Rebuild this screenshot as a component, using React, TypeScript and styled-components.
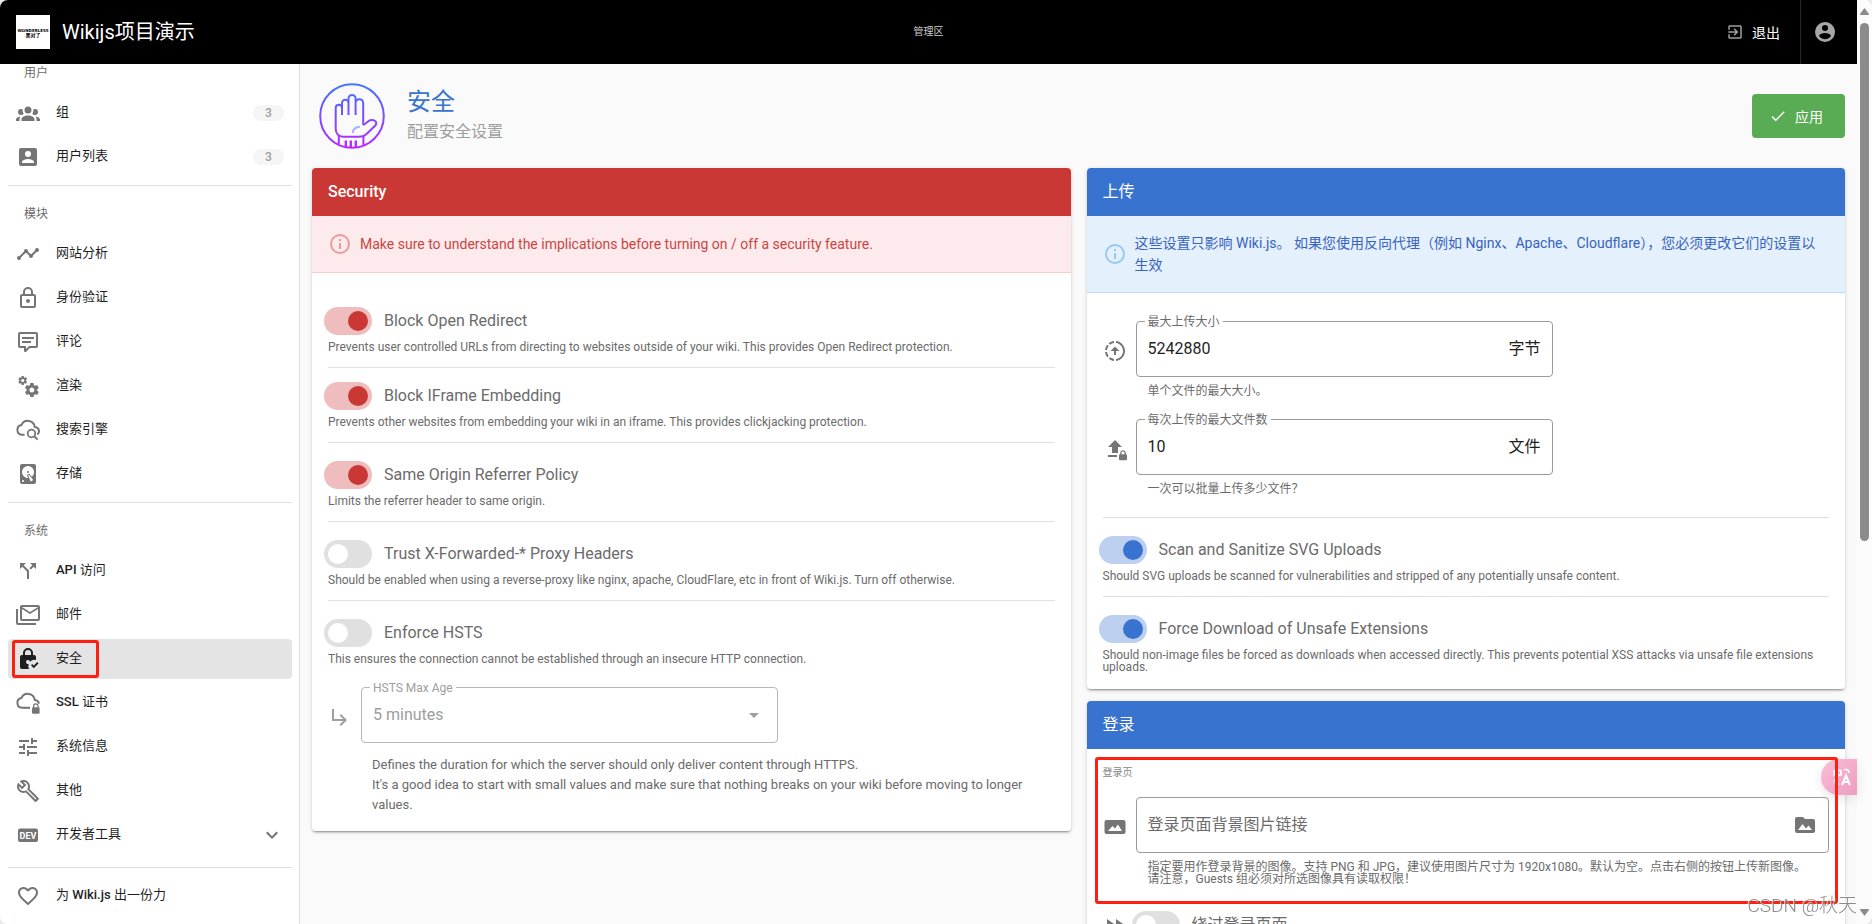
import React, { useState } from 'react';
import styled, { createGlobalStyle, css } from 'styled-components';

const palette = {
  blue: '#3973d0',
  blueTrack: '#bdd0f0',
  red: '#c93834',
  redTrack: '#efbdbe',
  green: '#59ac53',
  text: '#1f1f1f',
  muted: '#6b6b6b',
  faint: '#9e9e9e',
  line: '#e0e0e0',
  mark: '#fd2010',
};

const GlobalStyle = createGlobalStyle`
  *, *::before, *::after { box-sizing: border-box; }
  html, body { margin: 0; background: #e9ecee; }
  body, button, input, select {
    font-family: Roboto, "Noto Sans CJK SC", sans-serif;
  }
`;

/* ---------- icons ---------- */

const paths = {
  group:
    'M12,5.5A3.5,3.5 0 0,1 15.5,9A3.5,3.5 0 0,1 12,12.5A3.5,3.5 0 0,1 8.5,9A3.5,3.5 0 0,1 12,5.5M5,8C5.56,8 6.08,8.15 6.53,8.42C6.38,9.85 6.8,11.27 7.66,12.38C7.16,13.34 6.16,14 5,14A3,3 0 0,1 2,11A3,3 0 0,1 5,8M19,8A3,3 0 0,1 22,11A3,3 0 0,1 19,14C17.84,14 16.84,13.34 16.34,12.38C17.2,11.27 17.62,9.85 17.47,8.42C17.92,8.15 18.44,8 19,8M5.5,18.25C5.5,16.18 8.41,14.5 12,14.5C15.59,14.5 18.5,16.18 18.5,18.25V20H5.5V18.25M0,20V18.5C0,17.11 1.89,15.94 4.45,15.6C3.86,16.28 3.5,17.22 3.5,18.25V20H0M24,20H20.5V18.25C20.5,17.22 20.14,16.28 19.55,15.6C22.11,15.94 24,17.11 24,18.5V20Z',
  accountBox:
    'M6,17C6,15 10,13.9 12,13.9C14,13.9 18,15 18,17V18H6M15,9A3,3 0 0,1 12,12A3,3 0 0,1 9,9A3,3 0 0,1 12,6A3,3 0 0,1 15,9M3,5V19A2,2 0 0,0 5,21H19A2,2 0 0,0 21,19V5A2,2 0 0,0 19,3H5C3.89,3 3,3.9 3,5Z',
  timeline:
    'M3,14L3.5,14.07L8.07,9.5C7.89,8.85 8.06,8.11 8.59,7.59C9.37,6.8 10.63,6.8 11.41,7.59C11.94,8.11 12.11,8.85 11.93,9.5L14.5,12.07L15,12C15.18,12 15.35,12 15.5,12.07L19.07,8.5C19,8.35 19,8.18 19,8A2,2 0 0,1 21,6A2,2 0 0,1 23,8A2,2 0 0,1 21,10C20.82,10 20.65,10 20.5,9.93L16.93,13.5C17,13.65 17,13.82 17,14A2,2 0 0,1 15,16A2,2 0 0,1 13,14L13.07,13.5L10.5,10.93C10.18,11 9.82,11 9.5,10.93L4.93,15.5L5,16A2,2 0 0,1 3,18A2,2 0 0,1 1,16A2,2 0 0,1 3,14Z',
  lock:
    'M12,17C10.89,17 10,16.1 10,15C10,13.89 10.89,13 12,13A2,2 0 0,1 14,15A2,2 0 0,1 12,17M18,20V10H6V20H18M18,8A2,2 0 0,1 20,10V20A2,2 0 0,1 18,22H6C4.89,22 4,21.1 4,20V10C4,8.89 4.89,8 6,8H7V6A5,5 0 0,1 12,1A5,5 0 0,1 17,6V8H18M12,3A3,3 0 0,0 9,6V8H15V6A3,3 0 0,0 12,3Z',
  comment:
    'M9,22A1,1 0 0,1 8,21V18H4A2,2 0 0,1 2,16V4C2,2.89 2.9,2 4,2H20A2,2 0 0,1 22,4V16A2,2 0 0,1 20,18H13.9L10.2,21.71C10,21.9 9.75,22 9.5,22H9M10,16V19.08L13.08,16H20V4H4V16H10M6,7H18V9H6V7M6,11H15V13H6V11Z',
  cogs:
    'M15.9,18.45C17.25,18.45 18.35,17.35 18.35,16C18.35,14.65 17.25,13.55 15.9,13.55C14.54,13.55 13.45,14.65 13.45,16C13.45,17.35 14.54,18.45 15.9,18.45M21.1,16.68L22.58,17.84C22.71,17.95 22.75,18.13 22.66,18.29L21.26,20.71C21.17,20.86 21,20.92 20.83,20.86L19.09,20.16C18.73,20.44 18.33,20.67 17.91,20.85L17.64,22.7C17.62,22.87 17.47,23 17.3,23H14.5C14.32,23 14.18,22.87 14.15,22.7L13.89,20.85C13.46,20.67 13.07,20.44 12.71,20.16L10.96,20.86C10.81,20.92 10.62,20.86 10.54,20.71L9.14,18.29C9.05,18.13 9.09,17.95 9.22,17.84L10.7,16.68L10.65,16L10.7,15.31L9.22,14.16C9.09,14.05 9.05,13.86 9.14,13.71L10.54,11.29C10.62,11.13 10.81,11.07 10.96,11.13L12.71,11.84C13.07,11.56 13.46,11.32 13.89,11.15L14.15,9.29C14.18,9.13 14.32,9 14.5,9H17.3C17.47,9 17.62,9.13 17.64,9.29L17.91,11.15C18.33,11.32 18.73,11.56 19.09,11.84L20.83,11.13C21,11.07 21.17,11.13 21.26,11.29L22.66,13.71C22.75,13.86 22.71,14.05 22.58,14.16L21.1,15.31L21.15,16L21.1,16.68M6.69,8.07C7.56,8.07 8.26,7.37 8.26,6.5C8.26,5.63 7.56,4.92 6.69,4.92A1.58,1.58 0 0,0 5.11,6.5C5.11,7.37 5.82,8.07 6.69,8.07M10.03,6.94L11,7.68C11.07,7.75 11.09,7.87 11.03,7.97L10.13,9.53C10.08,9.63 9.96,9.67 9.86,9.63L8.74,9.18L8,9.62L7.81,10.81C7.79,10.92 7.7,11 7.59,11H5.79C5.67,11 5.58,10.92 5.56,10.81L5.4,9.62L4.64,9.18L3.52,9.63C3.41,9.67 3.3,9.63 3.24,9.53L2.34,7.97C2.28,7.87 2.31,7.75 2.39,7.68L3.34,6.94L3.31,6.5L3.34,6.06L2.39,5.32C2.31,5.25 2.28,5.13 2.34,5.03L3.24,3.47C3.3,3.37 3.41,3.33 3.52,3.37L4.63,3.82L5.4,3.38L5.56,2.19C5.58,2.08 5.67,2 5.79,2H7.59C7.7,2 7.79,2.08 7.81,2.19L8,3.38L8.74,3.82L9.86,3.37C9.96,3.33 10.08,3.37 10.13,3.47L11.03,5.03C11.09,5.13 11.07,5.25 11,5.32L10.03,6.06L10.06,6.5L10.03,6.94Z',
  disk:
    'M6,2H18A2,2 0 0,1 20,4V20A2,2 0 0,1 18,22H6A2,2 0 0,1 4,20V4A2,2 0 0,1 6,2M12,4A6,6 0 0,0 6,10C6,13.31 8.69,16 12.1,16L11.22,13.77C10.95,13.29 11.11,12.68 11.59,12.4L12.45,11.9C12.93,11.63 13.54,11.79 13.82,12.27L15.74,14.69C17.12,13.59 18,11.9 18,10A6,6 0 0,0 12,4M12,9A1,1 0 0,1 13,10A1,1 0 0,1 12,11A1,1 0 0,1 11,10A1,1 0 0,1 12,9M7,18A1,1 0 0,0 6,19A1,1 0 0,0 7,20A1,1 0 0,0 8,19A1,1 0 0,0 7,18M12.09,13.27L14.58,19.58L17.17,18.08L12.95,12.77L12.09,13.27Z',
  split:
    'M14,4L16.29,6.29L13.41,9.17L14.83,10.59L17.71,7.71L20,10V4M10,4H4V10L6.29,7.71L11,12.41V20H13V11.59L7.71,6.29',
  mail:
    'M22,2H6C4.9,2 4,2.9 4,4V16A2,2 0 0,0 6,18H22A2,2 0 0,0 24,16V4A2,2 0 0,0 22,2M22,16H6V6L14,11L22,6V16M22,4L14,9L6,4M2,6H0V20A2,2 0 0,0 2,22H20V20H2V6Z',
  lockCheck:
    'M18,8H17V6A5,5 0 0,0 7,6V8H6A2,2 0 0,0 4,10V20A2,2 0 0,0 6,22H13.1A6.2,6.2 0 0,1 12.7,16.9A2,2 0 1,1 14,14.8A6.2,6.2 0 0,1 20,13.1V10A2,2 0 0,0 18,8M9,6A3,3 0 0,1 15,6V8H9V6M17.75,21.2L15,18.2L16.16,17L17.75,18.6L21.34,15L22.5,16.4L17.75,21.2Z',
  tune:
    'M3,17V19H9V17H3M3,5V7H13V5H3M13,21V19H21V17H13V15H11V21H13M7,9V11H3V13H7V15H9V9H7M21,13V11H11V13H21M15,9H17V7H21V5H17V3H15V9Z',
  wrench:
    'M22.61,19L13.53,9.91C14.46,7.57 14,4.81 12.09,2.91C9.79,0.61 6.21,0.4 3.66,2.26L7.5,6.11L6.08,7.52L2.25,3.69C0.39,6.23 0.6,9.82 2.9,12.11C4.76,13.97 7.47,14.46 9.79,13.59L18.9,22.7C19.29,23.09 19.92,23.09 20.31,22.7L22.61,20.4C23,20 23,19.39 22.61,19M19.61,20.59L10.15,11.13C9.54,11.58 8.86,11.85 8.15,11.95C6.79,12.15 5.36,11.74 4.32,10.7C3.37,9.76 2.93,8.5 3,7.26L6.09,10.35L10.33,6.11L7.24,3C8.48,2.95 9.73,3.39 10.68,4.33C11.76,5.41 12.17,6.9 11.92,8.29C11.8,9 11.5,9.66 11.04,10.25L20.5,19.7L19.61,20.59Z',
  heart:
    'M12.1,18.55L12,18.65L11.89,18.55C7.14,14.24 4,11.39 4,8.5C4,6.5 5.5,5 7.5,5C9.04,5 10.54,6 11.07,7.36H12.93C13.46,6 14.96,5 16.5,5C18.5,5 20,6.5 20,8.5C20,11.39 16.86,14.24 12.1,18.55M16.5,3C14.76,3 13.09,3.81 12,5.08C10.91,3.81 9.24,3 7.5,3C4.42,3 2,5.41 2,8.5C2,12.27 5.4,15.36 10.55,20.03L12,21.35L13.45,20.03C18.6,15.36 22,12.27 22,8.5C22,5.41 19.58,3 16.5,3Z',
  chevronDown: 'M7.41,8.58L12,13.17L16.59,8.58L18,10L12,16L6,10L7.41,8.58Z',
  exit:
    'M19,3H5C3.89,3 3,3.89 3,5V9H5V5H19V19H5V15H3V19A2,2 0 0,0 5,21H19A2,2 0 0,0 21,19V5C21,3.89 20.1,3 19,3M10.08,15.58L11.5,17L16.5,12L11.5,7L10.08,8.41L12.67,11H3V13H12.67L10.08,15.58Z',
  account:
    'M12,19.2C9.5,19.2 7.29,17.92 6,16C6.03,14 10,12.9 12,12.9C14,12.9 17.97,14 18,16C16.71,17.92 14.5,19.2 12,19.2M12,5A3,3 0 0,1 15,8A3,3 0 0,1 12,11A3,3 0 0,1 9,8A3,3 0 0,1 12,5M12,2A10,10 0 0,0 2,12A10,10 0 0,0 12,22A10,10 0 0,0 22,12C22,6.47 17.5,2 12,2Z',
  check: 'M21,7L9,19L3.5,13.5L4.91,12.09L9,16.17L19.59,5.59L21,7Z',
  info:
    'M11,9H13V7H11M12,20C7.59,20 4,16.41 4,12C4,7.59 7.59,4 12,4C16.41,4 20,7.59 20,12C20,16.41 16.41,20 12,20M12,2A10,10 0 0,0 2,12A10,10 0 0,0 12,22A10,10 0 0,0 22,12A10,10 0 0,0 12,2M11,17H13V11H11V17Z',
  subArrow: 'M19,15L13,21L11.58,19.58L15.17,16H4V4H6V14H15.17L11.58,10.42L13,9L19,15Z',
  menuDown: 'M7,10L12,15L17,10H7Z',
  progressUpload:
    'M13,2.03V4.05C17.39,4.59 20.5,8.58 19.96,12.97C19.5,16.61 16.64,19.5 13,19.93V21.93C18.5,21.38 22.5,16.5 21.95,11C21.5,6.25 17.73,2.5 13,2.03M11,2.06C9.05,2.25 7.19,3 5.67,4.26L7.1,5.74C8.22,4.84 9.57,4.26 11,4.06V2.06M4.26,5.67C3,7.19 2.25,9.04 2.05,11H4.05C4.24,9.58 4.8,8.23 5.69,7.1L4.26,5.67M2.06,13C2.26,14.96 3.03,16.81 4.27,18.33L5.69,16.9C4.81,15.77 4.24,14.42 4.06,13H2.06M7.1,18.37L5.67,19.74C7.18,21 9.04,21.79 11,22V20C9.58,19.82 8.23,19.25 7.1,18.37M12,7.5L7.5,12H11V16H13V12H16.5L12,7.5Z',
  uploadLock:
    'M5,10L12,3L19,10H15V16H9V10H5M5,18H14V20H5V18M22.8,17.3V15.8C22.8,14.4 21.4,13.3 20,13.3C18.6,13.3 17.2,14.4 17.2,15.8V17.3C16.6,17.3 16,17.9 16,18.5V22C16,22.7 16.6,23.3 17.2,23.3H22.7C23.4,23.3 24,22.7 24,22.1V18.6C24,17.9 23.4,17.3 22.8,17.3M21.5,17.3H18.5V15.8C18.5,15 19.2,14.5 20,14.5C20.8,14.5 21.5,15 21.5,15.8V17.3Z',
  image:
    'M3.5,5H20.5A2,2 0 0,1 22.5,7V17A2,2 0 0,1 20.5,19H3.5A2,2 0 0,1 1.5,17V7A2,2 0 0,1 3.5,5M5,16H19L15,9.5L12,13.5L9.5,11L5,16Z',
  folderImage:
    'M5,17L9.5,11L13,15.5L15.5,12.5L19,17M20,6H12L10,4H4A2,2 0 0,0 2,6V18A2,2 0 0,0 4,20H20A2,2 0 0,0 22,18V8A2,2 0 0,0 20,6Z',
  fastForward: 'M13,6V18L21.5,12M4,18L12.5,12L4,6V18Z',
};

type IconName = keyof typeof paths | 'cloudSearch' | 'cloudLock' | 'dev';

const IconSvg = styled.svg<{ $size: number }>`
  display: block;
  flex: none;
  width: ${(p) => p.$size}px;
  height: ${(p) => p.$size}px;
  fill: currentColor;
`;

const cloudOutline =
  'M8.5,16.8H6A4.9,4.9 0 0 1 5.4,7.1A7,7 0 0 1 18.8,9A4.6,4.6 0 0 1 23,12.6';

function Icon({ name, size = 24 }: { name: IconName; size?: number }) {
  return (
    <IconSvg $size={size} viewBox="0 0 24 24" aria-hidden="true">
      {name === 'cloudSearch' && (
        <>
          <path d={cloudOutline} fill="none" stroke="currentColor" strokeWidth="2" />
          <circle cx="15.5" cy="15.5" r="3.8" fill="none" stroke="currentColor" strokeWidth="1.8" />
          <path d="M18.2,18.2L21.6,21.6" stroke="currentColor" strokeWidth="2" />
          <path d="M22.9,12C23.3,13.8 22.6,15.4 21.4,16.4" fill="none" stroke="currentColor" strokeWidth="2" />
        </>
      )}
      {name === 'cloudLock' && (
        <>
          <path d={cloudOutline} fill="none" stroke="currentColor" strokeWidth="2" />
          <path d="M8,16.8H14" stroke="currentColor" strokeWidth="2" />
          <rect x="16" y="16.3" width="7.6" height="6.4" rx="1.2" />
          <path d="M17.6,17V15A2.2,2.2 0 0 1 22,15V17" fill="none" stroke="currentColor" strokeWidth="1.2" />
        </>
      )}
      {name === 'dev' && (
        <>
          <rect x="2" y="5.5" width="20" height="13.5" rx="2" />
          <text x="12" y="15.5" textAnchor="middle" fontSize="9" fontWeight="700" fill="#fff" fontFamily="Roboto">
            DEV
          </text>
        </>
      )}
      {name in paths && <path fillRule="evenodd" d={paths[name as keyof typeof paths]} />}
    </IconSvg>
  );
}

function HandArt() {
  return (
    <HandSvg viewBox="0 0 66 66" aria-hidden="true">
      <defs>
        <linearGradient id="hand" gradientUnits="userSpaceOnUse" x1="33" y1="0" x2="33" y2="66">
          <stop offset="0" stopColor="#4177ff" />
          <stop offset="0.5" stopColor="#7b4dff" />
          <stop offset="1" stopColor="#bd29f7" />
        </linearGradient>
        <linearGradient id="crease" gradientUnits="userSpaceOnUse" x1="41" y1="43" x2="33" y2="50">
          <stop offset="0" stopColor="#8fc4ff" />
          <stop offset="1" stopColor="#b9a3ff" />
        </linearGradient>
      </defs>
      <g fill="none" stroke="url(#hand)" strokeWidth="2">
        <circle cx="33" cy="33" r="31.8" />
        <path d="M16.7,46V24.5A3.2,3.2 0 0 1 23,24.5V32V20A3.2,3.2 0 0 1 29.5,20V32V15.5A3.5,3.5 0 0 1 36.6,15.5V32V20A3.8,3.8 0 0 1 44.2,20V42" />
        <path d="M44.2,42C47,41 49,38 51,37.3C56,35.7 58.5,39.5 56.5,42.3L47,51.5C45,53.4 43,53.8 40,53.8H24C19.5,53.8 16.7,50 16.7,46" />
        <path d="M19.8,52V62M44.4,53V62" />
        <path d="M26.8,57.5V64M31.8,57.5V65M36.8,57.5V64" strokeWidth="2.4" />
      </g>
      <path d="M33.8,50C34,46 37,44 41,43.8" fill="none" stroke="url(#crease)" strokeWidth="2" />
    </HandSvg>
  );
}

const HandSvg = styled.svg`
  display: block;
  flex: none;
  width: 66px;
  height: 66px;
  margin: 7px;
`;

/* ---------- window frame ---------- */

const Window = styled.div`
  display: flex;
  height: 100vh;
  overflow: hidden;
  border-radius: 8px;
  background: #fcfcfc;
`;

const Page = styled.div`
  display: flex;
  flex: 1;
  flex-direction: column;
  min-width: 0;
`;

const Columns = styled.div`
  display: flex;
  flex: 1;
  min-height: 0;
`;

const Scrollbar = styled.div`
  display: flex;
  flex: none;
  flex-direction: column;
  align-items: center;
  justify-content: space-between;
  width: 15px;
  padding: 8px 0;
  color: #8b8b8b;
`;

const Thumb = styled.div`
  width: 9px;
  height: 57%;
  margin: 8px 0 auto;
  border-radius: 5px;
  background: #8b8b8b;
`;

const ScrollArrow = styled.svg`
  display: block;
  width: 9px;
  height: 7px;
  fill: currentColor;
`;

/* ---------- top bar ---------- */

const TopBar = styled.header`
  display: grid;
  flex: none;
  grid-template-columns: 1fr auto 1fr;
  align-items: center;
  height: 64px;
  background: #000;
  color: #fff;
`;

const Brand = styled.div`
  display: flex;
  align-items: center;
  gap: 12px;
  padding-left: 16px;
  font-size: 20px;
  line-height: 32px;
`;

const Logo = styled.svg`
  display: block;
  width: 34px;
  height: 34px;
`;

const Area = styled.div`
  font-size: 10px;
  line-height: 16px;
  color: #d0d0d0;
`;

const TopActions = styled.div`
  display: flex;
  align-items: center;
  justify-content: flex-end;
  height: 64px;
`;

const ExitButton = styled.button`
  display: flex;
  align-items: center;
  gap: 8px;
  height: 36px;
  padding: 0 20px;
  border: 0;
  background: none;
  color: #fff;
  font-size: 14px;

  svg {
    color: #9e9e9e;
  }
`;

const AccountButton = styled.button`
  display: flex;
  align-items: center;
  height: 64px;
  padding: 0 20px 0 12px;
  border: 0;
  border-left: 1px solid #262626;
  background: none;
  color: #a6a6a6;
`;

/* ---------- side navigation ---------- */

const Sidebar = styled.nav`
  flex: none;
  width: 300px;
  overflow: hidden;
  border-right: 1px solid ${palette.line};
  background: #fff;
`;

const NavScroll = styled.div`
  margin-top: -11px;
  padding: 0 7px 0 8px;
`;

const NavSection = styled.section`
  &:not(:first-child) {
    margin-top: 8px;
    padding-top: 8px;
    border-top: 1px solid ${palette.line};
  }

  &:last-child {
    margin-top: 12px;
  }
`;

const NavHeading = styled.h2`
  margin: 0;
  padding: 0 16px;
  color: ${palette.muted};
  font-size: 12px;
  font-weight: 400;
  line-height: 40px;
`;

const NavList = styled.ul`
  display: flex;
  flex-direction: column;
  gap: 4px;
  margin: 0;
  padding: 0;
  list-style: none;
`;

const NavItem = styled.li`
  position: relative;
`;

const NavLink = styled.a<{ $active?: boolean }>`
  display: flex;
  align-items: center;
  gap: 16px;
  height: 40px;
  padding: 0 8px;
  border-radius: 4px;
  color: ${palette.text};
  font-size: 13px;
  line-height: 16px;
  text-decoration: none;
  background: ${(p) => (p.$active ? '#e4e4e4' : 'transparent')};

  svg {
    color: ${(p) => (p.$active ? palette.text : '#757575')};
  }
`;

const NavText = styled.span`
  flex: 1;
  padding-bottom: 2px;
`;

const Latin = styled.span`
  font-weight: 500;
`;

const Count = styled.span`
  width: 31px;
  border-radius: 8px;
  background: #f5f5f5;
  color: ${palette.faint};
  font-size: 12px;
  font-weight: 500;
  line-height: 16px;
  text-align: center;
`;

const ItemMark = styled.div`
  position: absolute;
  inset: 1px auto 1px 4px;
  width: 87px;
  border: 3px solid ${palette.mark};
  border-radius: 3px;
  pointer-events: none;
`;

/* ---------- main content ---------- */

const Main = styled.main`
  flex: 1;
  min-width: 0;
  overflow: hidden;
  padding: 0 12px;
  background: #fafafa;
`;

const PageHead = styled.div`
  display: flex;
  align-items: center;
  height: 104px;
`;

const HeadText = styled.div`
  flex: 1;
  margin: 0 0 2px 15px;
`;

const Title = styled.h1`
  margin: 0 0 2px;
  color: ${palette.blue};
  font-size: 24px;
  font-weight: 400;
  line-height: 32px;
`;

const Subtitle = styled.p`
  margin: 0;
  color: ${palette.faint};
  font-size: 16px;
  line-height: 24px;
`;

const ApplyButton = styled.button`
  display: flex;
  align-items: center;
  gap: 8px;
  height: 44px;
  padding: 0 22px 0 17px;
  border: 0;
  border-radius: 4px;
  background: ${palette.green};
  color: #fff;
  font-size: 14px;
`;

const CardGrid = styled.div`
  display: grid;
  grid-template-columns: 1fr 1fr;
  gap: 16px;
  align-items: start;
`;

const CardStack = styled.div`
  display: flex;
  flex-direction: column;
  gap: 12px;
`;

type Tone = 'red' | 'blue';

const Card = styled.section`
  overflow: hidden;
  border-radius: 4px;
  background: #fff;
  box-shadow:
    0 3px 1px -2px rgba(0, 0, 0, 0.2),
    0 2px 2px 0 rgba(0, 0, 0, 0.14),
    0 1px 5px 0 rgba(0, 0, 0, 0.12);
`;

const CardTitle = styled.h2<{ $tone: Tone }>`
  margin: 0;
  padding: 0 16px;
  background: ${(p) => palette[p.$tone]};
  color: #fff;
  font-size: 16px;
  font-weight: 400;
  line-height: 48px;
`;

const Notice = styled.div<{ $tone: Tone }>`
  display: flex;
  align-items: center;
  gap: 8px;
  padding: 16px;
  border-bottom: 1px solid;
  font-size: 14px;
  line-height: 22px;
  ${(p) =>
    p.$tone === 'red'
      ? css`
          border-color: #fbcbcf;
          background: #fdeaec;
          color: #cb4643;
          svg {
            color: #ea9b9b;
          }
        `
      : css`
          border-color: #badbf9;
          background: #e4f0fc;
          color: #3763be;
          svg {
            color: #95c7f7;
          }
        `}
`;

const CardBody = styled.div`
  padding: 16px;
`;

const Setting = styled.div<{ $tight?: boolean }>`
  padding-top: ${(p) => (p.$tight ? 14 : 18)}px;
`;

const Rule = styled.hr`
  height: 1px;
  margin: 14px 0 0;
  border: 0;
  background: ${palette.line};
`;

const SwitchLabel = styled.label`
  display: flex;
  align-items: center;
  gap: 12px;
  margin-left: -4px;
  color: ${palette.muted};
  font-size: 16px;
  line-height: 28px;
`;

const SwitchInput = styled.input<{ $tone: Tone }>`
  appearance: none;
  flex: none;
  width: 48px;
  height: 28px;
  margin: 0;
  padding: 4px;
  border-radius: 14px;
  background: ${palette.line};

  &::before {
    content: '';
    display: block;
    width: 20px;
    height: 20px;
    border-radius: 10px;
    background: #fff;
  }

  &:checked {
    background: ${(p) => (p.$tone === 'red' ? palette.redTrack : palette.blueTrack)};
  }

  &:checked::before {
    margin-left: 20px;
    background: ${(p) => palette[p.$tone]};
  }
`;

const Hint = styled.p`
  margin: 6px 0 0;
  color: ${palette.muted};
  font-size: 12px;
  line-height: 12px;
`;

function Switch({
  id,
  tone,
  label,
  hint,
  initial = false,
  tight = false,
}: {
  id: string;
  tone: Tone;
  label: string;
  hint: string;
  initial?: boolean;
  tight?: boolean;
}) {
  const [on, setOn] = useState(initial);
  return (
    <Setting $tight={tight}>
      <SwitchLabel htmlFor={id}>
        <SwitchInput id={id} type="checkbox" $tone={tone} checked={on} onChange={() => setOn(!on)} />
        {label}
      </SwitchLabel>
      <Hint>{hint}</Hint>
    </Setting>
  );
}

/* ---------- outlined fields ---------- */

const FieldRow = styled.div<{ $wide?: boolean; $dim?: boolean }>`
  display: flex;
  gap: 9px;
  max-width: ${(p) => (p.$wide ? 'none' : '450px')};
  color: ${(p) => (p.$dim ? palette.faint : '#757575')};

  & > svg {
    margin-top: 18px;
  }
`;

const Box = styled.div<{ $dim?: boolean }>`
  position: relative;
  display: flex;
  flex: 1;
  align-items: center;
  height: 56px;
  min-width: 0;
  padding: 0 11px;
  border: 1px solid ${(p) => (p.$dim ? '#b8b8b8' : '#9b9b9b')};
  border-radius: 4px;
  background: #fff;
`;

const FloatLabel = styled.label<{ $dim?: boolean }>`
  position: absolute;
  top: -6px;
  left: 8px;
  padding: 0 3px;
  background: #fff;
  color: ${(p) => (p.$dim ? palette.faint : palette.muted)};
  font-size: 12px;
  line-height: 12px;
`;

const textControl = css`
  flex: 1;
  width: 100%;
  min-width: 0;
  height: 32px;
  padding: 0 0 2px;
  border: 0;
  outline: 0;
  background: none;
  font-size: 16px;
`;

const TextInput = styled.input`
  ${textControl}
  color: ${palette.text};

  &::placeholder {
    color: ${palette.muted};
    opacity: 1;
  }
`;

const SelectInput = styled.select`
  ${textControl}
  appearance: none;
  color: ${palette.faint};
  opacity: 1;
`;

const Suffix = styled.span`
  color: ${palette.text};
  font-size: 16px;
  line-height: 24px;
`;

const PickButton = styled.button`
  padding: 0;
  border: 0;
  background: none;
  color: #757575;
`;

const FieldHint = styled.p`
  margin: 8px 0 22px;
  padding-left: 45px;
  color: ${palette.muted};
  font-size: 12px;
  line-height: 12px;
`;

const LongHint = styled.p`
  margin: 12px 0 0;
  padding-left: 44px;
  color: ${palette.muted};
  font-size: 13px;
  line-height: 20px;
`;

const FieldGroup = styled.div<{ $gap: number }>`
  padding-top: ${(p) => p.$gap}px;
`;

const Overline = styled.h3`
  margin: 0 0 16px;
  color: #858585;
  font-size: 10px;
  font-weight: 400;
  line-height: 16px;
`;

const Marked = styled.div`
  position: relative;
  display: flow-root;
`;

const AreaMark = styled.div`
  position: absolute;
  z-index: 2;
  inset: -8px -9px 3px -8px;
  border: 3px solid ${palette.mark};
  border-radius: 3px;
  pointer-events: none;
`;

const BypassRow = styled.div`
  display: flex;
  align-items: center;
  gap: 9px;
  padding-top: 4px;
  color: #757575;
`;

/* ---------- floating pieces ---------- */

const TranslateButton = styled.button`
  position: fixed;
  z-index: 1;
  top: 759px;
  right: 15px;
  display: flex;
  align-items: center;
  justify-content: center;
  width: 36px;
  height: 36px;
  padding: 0 0 0 5px;
  border: 0;
  border-radius: 18px 0 0 18px;
  background: linear-gradient(135deg, #f9bed6, #ee9dc0);
  box-shadow: 0 4px 12px rgba(0, 0, 0, 0.1);
`;

const TranslateIcon = styled.svg`
  display: block;
  width: 20px;
  height: 20px;
`;

const Watermark = styled.div`
  position: fixed;
  z-index: 3;
  right: 15px;
  bottom: 4px;
  color: rgba(120, 120, 120, 0.85);
  font-size: 19px;
  font-weight: 300;
  line-height: 28px;
  text-shadow: -1px -1px 0 rgba(255, 255, 255, 0.7);
`;

/* ---------- data ---------- */

type Item = { icon: IconName; text: string; count?: number; active?: boolean; expand?: boolean };

const sections: { heading?: string; items: Item[] }[] = [
  {
    heading: '用户',
    items: [
      { icon: 'group', text: '组', count: 3 },
      { icon: 'accountBox', text: '用户列表', count: 3 },
    ],
  },
  {
    heading: '模块',
    items: [
      { icon: 'timeline', text: '网站分析' },
      { icon: 'lock', text: '身份验证' },
      { icon: 'comment', text: '评论' },
      { icon: 'cogs', text: '渲染' },
      { icon: 'cloudSearch', text: '搜索引擎' },
      { icon: 'disk', text: '存储' },
    ],
  },
  {
    heading: '系统',
    items: [
      { icon: 'split', text: 'API 访问' },
      { icon: 'mail', text: '邮件' },
      { icon: 'lockCheck', text: '安全', active: true },
      { icon: 'cloudLock', text: 'SSL 证书' },
      { icon: 'tune', text: '系统信息' },
      { icon: 'wrench', text: '其他' },
      { icon: 'dev', text: '开发者工具', expand: true },
    ],
  },
  { items: [{ icon: 'heart', text: '为 Wiki.js 出一份力' }] },
];

/* Latin words are set in medium weight next to regular Chinese text. */
function MixedText({ text }: { text: string }) {
  return (
    <>
      {text.split(/([A-Za-z.]+)/).map((part, i) => (i % 2 ? <Latin key={i}>{part}</Latin> : part))}
    </>
  );
}

function Navigation() {
  return (
    <Sidebar>
      <NavScroll>
        {sections.map((section, i) => (
          <NavSection key={i}>
            {section.heading && <NavHeading>{section.heading}</NavHeading>}
            <NavList>
              {section.items.map((item) => (
                <NavItem key={item.text}>
                  <NavLink href="#" $active={item.active}>
                    <Icon name={item.icon} />
                    <NavText>
                      <MixedText text={item.text} />
                    </NavText>
                    {item.count !== undefined && <Count>{item.count}</Count>}
                    {item.expand && <Icon name="chevronDown" />}
                  </NavLink>
                  {item.active && <ItemMark />}
                </NavItem>
              ))}
            </NavList>
          </NavSection>
        ))}
      </NavScroll>
    </Sidebar>
  );
}

function SecurityCard() {
  return (
    <Card>
      <CardTitle $tone="red">
        <MixedText text="Security" />
      </CardTitle>
      <Notice $tone="red">
        <Icon name="info" />
        <span>Make sure to understand the implications before turning on / off a security feature.</span>
      </Notice>
      <CardBody>
        <Switch
          id="redirect"
          tone="red"
          initial
          label="Block Open Redirect"
          hint="Prevents user controlled URLs from directing to websites outside of your wiki. This provides Open Redirect protection."
        />
        <Rule />
        <Switch
          id="iframe"
          tone="red"
          initial
          tight
          label="Block IFrame Embedding"
          hint="Prevents other websites from embedding your wiki in an iframe. This provides clickjacking protection."
        />
        <Rule />
        <Switch
          id="referrer"
          tone="red"
          initial
          label="Same Origin Referrer Policy"
          hint="Limits the referrer header to same origin."
        />
        <Rule />
        <Switch
          id="proxy"
          tone="red"
          label="Trust X-Forwarded-* Proxy Headers"
          hint="Should be enabled when using a reverse-proxy like nginx, apache, CloudFlare, etc in front of Wiki.js. Turn off otherwise."
        />
        <Rule />
        <Switch
          id="hsts"
          tone="red"
          label="Enforce HSTS"
          hint="This ensures the connection cannot be established through an insecure HTTP connection."
        />
        <FieldGroup $gap={22}>
          <FieldRow $dim>
            <Icon name="subArrow" />
            <Box $dim>
              <FloatLabel htmlFor="max-age" $dim>
                HSTS Max Age
              </FloatLabel>
              <SelectInput id="max-age" disabled defaultValue="300">
                <option value="300">5 minutes</option>
              </SelectInput>
              <Icon name="menuDown" />
            </Box>
          </FieldRow>
          <LongHint>
            Defines the duration for which the server should only deliver content through HTTPS.
            <br />
            It's a good idea to start with small values and make sure that nothing breaks on your wiki before moving to
            longer values.
          </LongHint>
        </FieldGroup>
      </CardBody>
    </Card>
  );
}

function UploadCard() {
  return (
    <Card>
      <CardTitle $tone="blue">上传</CardTitle>
      <Notice $tone="blue">
        <Icon name="info" />
        <span>
          这些设置只影响 Wiki.js。 如果您使用反向代理（例如 Nginx、Apache、Cloudflare），您必须更改它们的设置以生效
        </span>
      </Notice>
      <CardBody>
        <FieldGroup $gap={12}>
          <FieldRow>
            <Icon name="progressUpload" />
            <Box>
              <FloatLabel htmlFor="max-size">最大上传大小</FloatLabel>
              <TextInput id="max-size" defaultValue="5242880" />
              <Suffix>字节</Suffix>
            </Box>
          </FieldRow>
          <FieldHint>单个文件的最大大小。</FieldHint>
          <FieldRow>
            <Icon name="uploadLock" />
            <Box>
              <FloatLabel htmlFor="max-files">每次上传的最大文件数</FloatLabel>
              <TextInput id="max-files" defaultValue="10" />
              <Suffix>文件</Suffix>
            </Box>
          </FieldRow>
          <FieldHint>一次可以批量上传多少文件？</FieldHint>
        </FieldGroup>
        <Rule />
        <Switch
          id="scan"
          tone="blue"
          initial
          label="Scan and Sanitize SVG Uploads"
          hint="Should SVG uploads be scanned for vulnerabilities and stripped of any potentially unsafe content."
        />
        <Rule />
        <Switch
          id="force"
          tone="blue"
          initial
          label="Force Download of Unsafe Extensions"
          hint="Should non-image files be forced as downloads when accessed directly. This prevents potential XSS attacks via unsafe file extensions uploads."
        />
      </CardBody>
    </Card>
  );
}

const LoginShell = styled(Card)`
  overflow: visible;

  ${CardTitle} {
    border-radius: 4px 4px 0 0;
  }
`;

function LoginCard() {
  const [bypass, setBypass] = useState(false);
  return (
    <LoginShell>
      <CardTitle $tone="blue">登录</CardTitle>
      <CardBody>
        <Marked>
          <Overline>登录页</Overline>
          <FieldRow $wide>
            <Icon name="image" />
            <Box>
              <TextInput aria-label="登录页面背景图片链接" placeholder="登录页面背景图片链接" />
              <PickButton type="button" aria-label="选择图片">
                <Icon name="folderImage" />
              </PickButton>
            </Box>
          </FieldRow>
          <FieldHint>
            指定要用作登录背景的图像。支持 PNG 和 JPG，建议使用图片尺寸为 1920x1080。默认为空。点击右侧的按钮上传新图像。
            <br />
            请注意，Guests 组必须对所选图像具有读取权限！
          </FieldHint>
          <AreaMark />
        </Marked>
        <BypassRow>
          <Icon name="fastForward" />
          <SwitchLabel htmlFor="bypass">
            <SwitchInput
              id="bypass"
              type="checkbox"
              $tone="blue"
              checked={bypass}
              onChange={() => setBypass(!bypass)}
            />
            绕过登录页面
          </SwitchLabel>
        </BypassRow>
      </CardBody>
    </LoginShell>
  );
}

export default function App() {
  return (
    <>
      <GlobalStyle />
      <Window>
        <Page>
          <TopBar>
            <Brand>
              <Logo viewBox="0 0 34 34" aria-hidden="true">
                <rect width="34" height="34" fill="#fff" />
                <text x="17" y="17" textAnchor="middle" fontSize="4" fontWeight="700" fontFamily="DejaVu Sans">
                  WONDERLESS
                </text>
                <text x="17" y="22" textAnchor="middle" fontSize="5" fontWeight="700" fontFamily="Noto Sans CJK SC">
                  黑对了
                </text>
              </Logo>
              Wikijs项目演示
            </Brand>
            <Area>管理区</Area>
            <TopActions>
              <ExitButton type="button">
                <Icon name="exit" size={18} />
                退出
              </ExitButton>
              <AccountButton type="button" aria-label="账号">
                <Icon name="account" />
              </AccountButton>
            </TopActions>
          </TopBar>
          <Columns>
            <Navigation />
            <Main>
              <PageHead>
                <HandArt />
                <HeadText>
                  <Title>安全</Title>
                  <Subtitle>配置安全设置</Subtitle>
                </HeadText>
                <ApplyButton type="button">
                  <Icon name="check" size={18} />
                  应用
                </ApplyButton>
              </PageHead>
              <CardGrid>
                <SecurityCard />
                <CardStack>
                  <UploadCard />
                  <LoginCard />
                </CardStack>
              </CardGrid>
            </Main>
          </Columns>
        </Page>
        <Scrollbar>
          <ScrollArrow viewBox="0 0 9 7">
            <path d="M4.5,0L9,6Q9,7 8,7H1Q0,7 0,6Z" />
          </ScrollArrow>
          <Thumb />
          <ScrollArrow viewBox="0 0 9 7">
            <path d="M4.5,7L9,1Q9,0 8,0H1Q0,0 0,1Z" />
          </ScrollArrow>
        </Scrollbar>
      </Window>
      <TranslateButton type="button" aria-label="翻译">
        <TranslateIcon viewBox="0 0 20 20" fill="none" stroke="#fff" strokeWidth="2">
          <path d="M2,3.5H9V8H2ZM5.5,1V11M12,2.5H14Q17,2.5 17,6M3,12V14Q3,17 7,17" strokeWidth="1.6" />
          <path d="M10,18L14,8.5L18,18M11.5,15H16.5" />
        </TranslateIcon>
      </TranslateButton>
      <Watermark>CSDN @秋天</Watermark>
    </>
  );
}
